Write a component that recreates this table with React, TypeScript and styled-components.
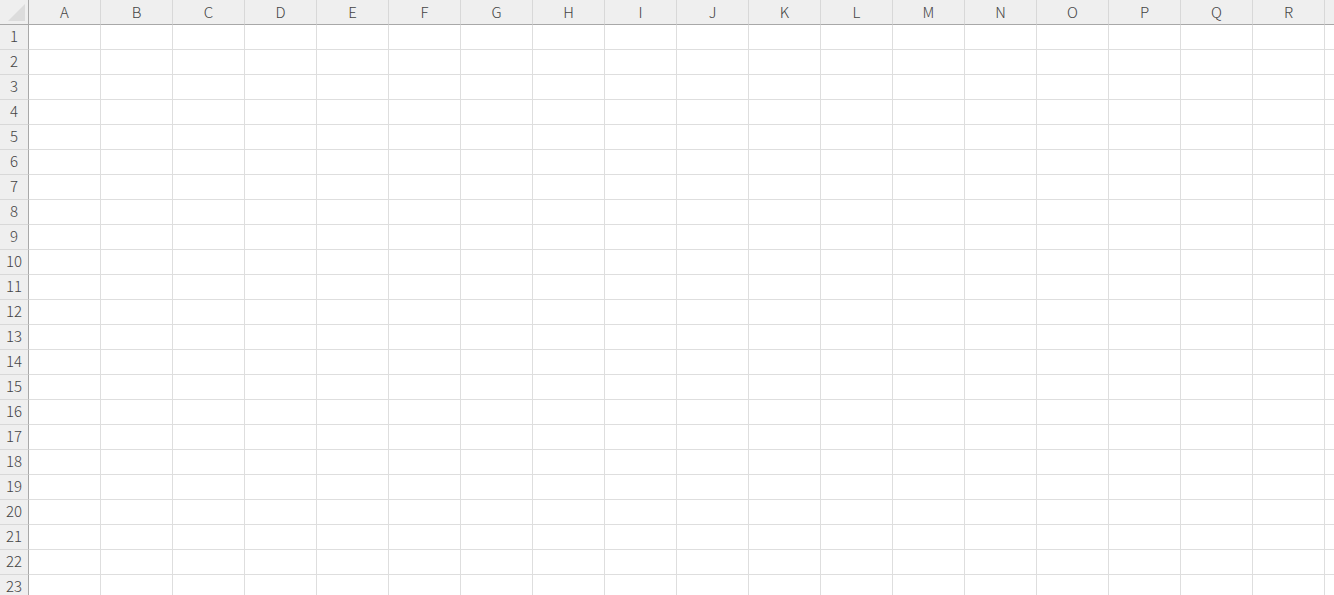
import React from "react";
import styled, { createGlobalStyle } from "styled-components";

const Global = createGlobalStyle`
  html, body { margin: 0; padding: 0; background: #ffffff; overflow: hidden; }
`;

const Sheet = styled.div`
  display: grid;
  grid-template-columns: 29px repeat(19, 72px);
  grid-auto-rows: 25px;
  width: 1334px;
  height: 595px;
  overflow: hidden;
  font-family: "Noto Sans CJK JP", "Noto Sans", sans-serif;
  font-weight: 300;
  font-size: 15px;
  color: #444444;
  background: #ffffff;
`;

const Corner = styled.div`
  position: relative;
  box-sizing: border-box;
  background: #efefef;
  border-right: 1px solid #a8a8a8;
  border-bottom: 1px solid #a8a8a8;
`;

const Triangle = styled.div`
  position: absolute;
  right: 3px;
  bottom: 3px;
  width: 0;
  height: 0;
  border-left: 17px solid transparent;
  border-bottom: 17px solid #dcdcdc;
`;

const ColHeader = styled.div`
  box-sizing: border-box;
  background: #efefef;
  border-right: 1px solid #d8d8d8;
  border-bottom: 1px solid #a8a8a8;
  display: flex;
  align-items: center;
  justify-content: center;
  line-height: 1;
  padding-bottom: 1px;
`;

const RowHeader = styled.div`
  box-sizing: border-box;
  background: #efefef;
  border-right: 1px solid #a8a8a8;
  border-bottom: 1px solid #d8d8d8;
  display: flex;
  align-items: center;
  justify-content: center;
  line-height: 1;
  padding-bottom: 3px;
`;

const Cell = styled.div`
  box-sizing: border-box;
  border-right: 1px solid #dedede;
  border-bottom: 1px solid #dedede;
`;

const letters = "ABCDEFGHIJKLMNOPQRS".split("").map((l) => (l === "S" ? "" : l));
const rows = Array.from({ length: 23 }, (_, i) => i + 1);

export default function App() {
  return (
    <>
      <Global />
      <Sheet>
        <Corner>
          <Triangle />
        </Corner>
        {letters.map((l, i) => (
          <ColHeader key={"c" + i}>{l}</ColHeader>
        ))}
        {rows.map((r) => (
          <React.Fragment key={r}>
            <RowHeader>{r}</RowHeader>
            {letters.map((_, i) => (
              <Cell key={i} />
            ))}
          </React.Fragment>
        ))}
      </Sheet>
    </>
  );
}
